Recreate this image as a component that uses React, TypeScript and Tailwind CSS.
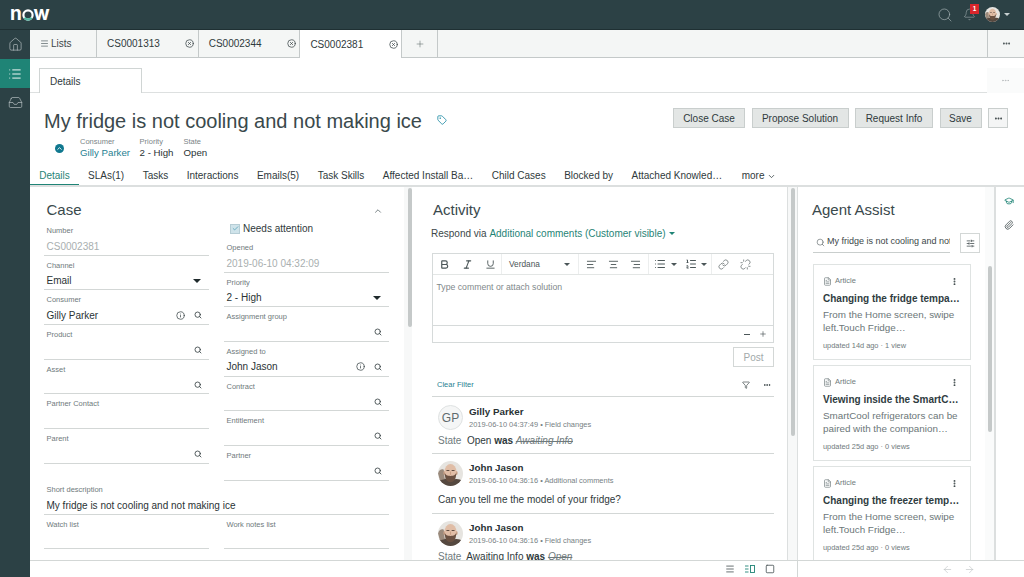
import React from "react";
import {
  Home, List, Inbox, Search, Bell, Menu, CircleX, Plus, Ellipsis, Tag, ChevronUp, ChevronDown, Info, Filter,
  Bold, Italic, Underline, AlignLeft, AlignCenter, AlignRight, ListOrdered, Link, Unlink, GraduationCap,
  Paperclip, SlidersHorizontal, FileText, EllipsisVertical, ArrowLeft, ArrowRight, Square, Check,
} from "lucide-react";

const Caret = ({ className = "" }: { className?: string }) => (
  <span className={`inline-block w-0 h-0 border-x-[3px] border-x-transparent border-t-[3px] border-t-current ${className}`} />
);

function Face({ size }: { size: number }) {
  return (
    <svg width={size} height={size} viewBox="0 0 26 26" className="shrink-0">
      <defs>
        <clipPath id={`fc${size}`}><circle cx="13" cy="13" r="13" /></clipPath>
      </defs>
      <g clipPath={`url(#fc${size})`}>
        <rect width="26" height="26" fill="#e6e4e0" />
        <path d="M0 26 L0 20 C4 18 8 18 13 20 C18 18 22 18 26 21 L26 26 Z" fill="#55483f" />
        <path d="M0 13 C1 9 4 8 6 9 L7 19 L2 20 Z" fill="#9a8a7c" />
        <ellipse cx="6.8" cy="12.5" rx="1.2" ry="2" fill="#c99f85" />
        <ellipse cx="19.2" cy="12.5" rx="1.2" ry="2" fill="#c99f85" />
        <ellipse cx="13" cy="11" rx="6.2" ry="8" fill="#e0bda6" />
        <path d="M7 12 C7 20 10 22 13 22 C16 22 19 20 19 12 C18 15 16.5 15.5 13 15.5 C9.5 15.5 8 15 7 12 Z" fill="#6a5142" />
        <rect x="8.8" y="9.4" width="3" height="0.9" fill="#4a3a30" />
        <rect x="14.2" y="9.4" width="3" height="0.9" fill="#4a3a30" />
        <rect x="12.4" y="11" width="1.2" height="3.4" fill="#c99f85" />
      </g>
    </svg>
  );
}

function Field({ label, value, muted, select, info, search = true, className = "" }: {
  label: string; value?: string; muted?: boolean; select?: boolean; info?: boolean; search?: boolean; className?: string;
}) {
  return (
    <div className={`h-[34.67px] border-b border-[#d3d7d6] flex flex-col pl-[2.5px] pr-[2px] ${className}`}>
      <div className="text-[7.5px] leading-[9px] mt-[5px] text-[#6f7a7c]">{label}</div>
      <div className="flex items-center h-[16px] mt-[3px] pr-[5px]">
        <span className={`flex-1 text-[10px] whitespace-nowrap ${muted ? "text-[#a9afb0]" : "text-[#2a3335]"}`}>{value}</span>
        {info && <Info size={9} className="text-[#3c4749] mr-[9px]" />}
        {select ? <Caret className="text-[#1f2a2c] border-x-[4px] border-t-[4px] mr-[1px]" /> : search && <Search size={8} strokeWidth={2.6} className="text-[#3c4749]" />}
      </div>
    </div>
  );
}

function Entry({ avatar, name, date, kind, children, className = "" }: { avatar: React.ReactNode; name: string; date: string; kind: string; children: React.ReactNode; className?: string }) {
  return (
    <div className={`border-b border-[#d3d7d6] px-[6px] w-[342px] overflow-hidden ${className}`}>
      <div className="flex gap-[6px] items-start pt-[7px]">
        {avatar}
        <div>
          <div className="text-[9.8px] font-bold leading-[12px] mt-[1px] text-[#283133]">{name}</div>
          <div className="text-[7.45px] leading-[10px] mt-[2px] text-[#778184]">{date} • {kind}</div>
        </div>
      </div>
      {children}
    </div>
  );
}

function Card({ title, body, meta }: { title: string; body: string[]; meta: string }) {
  return (
    <div className="h-[96px] shrink-0 border border-[#dfe3e2] px-[9px] pt-[11px] bg-white">
      <div className="flex items-center h-[10px]">
        <FileText size={9} className="text-[#7f898b]" />
        <span className="ml-[3px] text-[7.5px] text-[#6f7a7c] flex-1">Article</span>
        <EllipsisVertical size={9} strokeWidth={3} className="text-[#3c4749] mr-[2px]" />
      </div>
      <div className="text-[10px] font-bold mt-[6px] leading-[14px] text-[#2f3c3f] whitespace-nowrap">{title}</div>
      <div className="text-[9.85px] mt-[3px] leading-[12.5px] text-[#6b7678] whitespace-nowrap">{body[0]}<br />{body[1]}</div>
      <div className="text-[7.4px] mt-[7px] leading-[10px] text-[#6f7a7c]">{meta}</div>
    </div>
  );
}

const tabs = ["CS0001313", "CS0002344", "CS0002381"];
const subTabs = ["SLAs(1)", "Tasks", "Interactions", "Emails(5)", "Task Skills", "Affected Install Ba…", "Child Cases", "Blocked by", "Attached Knowled…"];

export default function App() {
  return (
    <div className="w-[1024px] h-[577px] overflow-hidden flex flex-col bg-white text-[#2a3335] font-['Liberation_Sans',Arial,sans-serif]">
      {/* Top bar */}
      <header className="h-[30px] shrink-0 bg-[#2c4145] border-b border-[#1f3033] flex items-center pl-[10px] pr-[14px]">
        <div className="flex items-center text-white font-['Inter',sans-serif] font-bold text-[19px] leading-none h-[19px] tracking-[-0.4px]">
          <span className="-mt-[2px]">n</span>
          <svg width="12" height="12" viewBox="0 0 12 12" className="ml-[0.5px] -mr-[0.5px]">
            <circle cx="6" cy="6" r="4.6" fill="none" stroke="#fff" strokeWidth="2.2" />
            <path d="M2.4 8.8 A4.6 4.6 0 0 0 9.6 8.8" fill="none" stroke="#4fb8a0" strokeWidth="2.2" />
          </svg>
          <span className="-mt-[2px]">w</span>
        </div>
        <div className="flex-1" />
        <Search size={16} strokeWidth={1} className="text-[#a9b5b6] mr-[10.5px]" />
        <div className="relative mr-[9px]">
          <Bell size={13} strokeWidth={1} className="text-[#a9b5b6]" />
          <span className="absolute -top-[4px] left-[7px] w-[9px] h-[10px] bg-[#d9262c] text-white text-[6.5px] leading-[10px] text-center font-bold">1</span>
        </div>
        <Face size={15} />
        <Caret className="ml-[4px] text-[#c9d1d2] border-x-[2px] border-t-[2px]" />
      </header>

      <div className="flex-1 flex min-h-0">
        {/* Left nav */}
        <nav className="w-[30px] shrink-0 bg-[#2c4145] flex flex-col">
          <div className="h-[29px] flex items-center justify-center"><Home size={15} strokeWidth={1} className="text-[#c3cccd]" /></div>
          <div className="h-[29px] bg-[#1f8476] flex items-center justify-center"><List size={14} strokeWidth={1.6} className="text-white" /></div>
          <div className="h-[29px] flex items-center justify-center"><Inbox size={15} strokeWidth={1} className="text-[#c3cccd]" /></div>
        </nav>

        <div className="flex-1 min-w-0 flex flex-col">
          {/* Workspace tabs */}
          <div className="h-[28px] shrink-0 flex bg-[#f4f6f5] border-b border-[#c4c9c9] text-[10px]">
            <div className="w-[67px] flex items-center pl-[10px] border-r border-[#c4c9c9] text-[#3c4749]">
              <Menu size={9} className="mr-[2px] text-[#5f6b6d]" />Lists
            </div>
            {tabs.map((t, i) => (
              <div key={t} className={`w-[101.7px] flex items-center pl-[10px] pr-[3.5px] border-r border-[#c4c9c9] text-[#2f3a3c] ${i === 2 ? "bg-white h-[28px]" : ""}`}>
                <span className="flex-1">{t}</span>
                <CircleX size={9} className="text-[#3c4749]" />
              </div>
            ))}
            <div className="w-[36px] flex items-center justify-center border-r border-[#c4c9c9]"><Plus size={10} strokeWidth={1.2} className="text-[#4d585a]" /></div>
            <div className="flex-1" />
            <div className="w-[37px] flex items-center justify-center border-l border-[#c4c9c9]"><Ellipsis size={9} strokeWidth={3} className="text-[#3c4749]" /></div>
          </div>

          {/* Details tab row */}
          <div className="h-[35px] shrink-0 flex items-end pl-[9px] border-b border-[#dde0e0]">
            <div className="w-[103px] h-[25px] border border-b-0 border-[#d0d5d4] bg-white -mb-px flex items-center pl-[10px] text-[10px] text-[#2f3a3c]">Details</div>
            <div className="flex-1" />
            <div className="w-[37px] h-[25px] bg-[#fafbfb] flex items-center justify-center -mb-px"><Ellipsis size={9} strokeWidth={2} className="text-[#b4babb]" /></div>
          </div>

          {/* Title row */}
          <div className="h-[43px] shrink-0 flex pl-[14px] pr-[16px]">
            <h1 className="text-[20px] leading-[26px] mt-[15px] text-[#3a494c] font-normal whitespace-nowrap">My fridge is not cooling and not making ice</h1>
            <Tag size={10} className="text-[#1d8aa3] mt-[22px] ml-[15px]" />
            <div className="flex-1" />
            <div className="flex gap-[6.5px] mt-[15px] h-[20px] text-[10px] text-[#2f3a3c]">
              {["Close Case", "Propose Solution", "Request Info", "Save"].map((b, i) => (
                <div key={b} className={`${["w-[72px]", "w-[97px]", "w-[78px]", "w-[42px]"][i]} border border-[#c9cecd] bg-[#e3e6e5] flex items-center justify-center`}>{b}</div>
              ))}
              <div className="w-[20px] border border-[#c9cecd] bg-[#f4f5f5] flex items-center justify-center"><Ellipsis size={9} strokeWidth={3} /></div>
            </div>
          </div>

          {/* Meta */}
          <div className="h-[32px] shrink-0 flex pl-[25px] items-start">
            <div className="mt-[8px] w-[9px] h-[9px] rounded-full bg-[#10788f] flex items-center justify-center"><ChevronUp size={7} strokeWidth={3} className="text-white" /></div>
            <div className="ml-[16px]"><div className="text-[7.5px] leading-[9px] mt-[1px] text-[#7b8587]">Consumer</div><div className="text-[9.7px] leading-[12px] mt-[1px] text-[#1f7f92]">Gilly Parker</div></div>
            <div className="ml-[9.5px]"><div className="text-[7.5px] leading-[9px] mt-[1px] text-[#7b8587]">Priority</div><div className="text-[9.7px] leading-[12px] mt-[1px]">2 - High</div></div>
            <div className="ml-[10px]"><div className="text-[7.5px] leading-[9px] mt-[1px] text-[#7b8587]">State</div><div className="text-[9.7px] leading-[12px] mt-[1px]">Open</div></div>
          </div>

          {/* Sub tabs */}
          <div className="h-[19px] shrink-0 flex items-start border-b-2 border-[#dcdfdf] text-[10px] text-[#2f3a3c]">
            <div className="h-[17px] w-[49px] text-center leading-[16px] text-[#1f8476] border-b border-[#1f8476]">Details</div>
            <div className="ml-[9px] flex leading-[16px] gap-[18.5px] whitespace-nowrap">
              {subTabs.map((t) => <span key={t}>{t}</span>)}
              <span className="flex items-center ml-[1px] h-[16px]">more <ChevronDown size={9} className="ml-[2px]" /></span>
            </div>
          </div>

          {/* Columns */}
          <div className="flex-1 min-h-0 flex">
            {/* Case */}
            <section className="w-[374px] shrink-0 pl-[14px] pr-[15px] overflow-hidden">
              <div className="flex items-center justify-between h-[34px] pt-[13px] pl-[2.5px] pr-[5px]">
                <h2 className="text-[15px] font-normal text-[#3a494c]">Case</h2>
                <ChevronUp size={10} className="text-[#5f6b6d] mr-[1px]" />
              </div>
              <div className="grid grid-cols-2 gap-x-[15px]">
                <div>
                  <Field label="Number" value="CS0002381" muted search={false} />
                  <Field label="Channel" value="Email" select />
                  <Field label="Consumer" value="Gilly Parker" info />
                  <Field label="Product" />
                  <Field label="Asset" />
                  <Field label="Partner Contact" search={false} />
                  <Field label="Parent" />
                </div>
                <div>
                  <div className="h-[17px] pb-[2px] flex items-center pl-[6px] text-[10px] text-[#2f3a3c]">
                    <span className="w-[10px] h-[10px] bg-[#cfe3ea] border border-[#b6cdd5] flex items-center justify-center mr-[3px]"><Check size={7} className="text-[#2a8aa5]" /></span>
                    Needs attention
                  </div>
                  <Field label="Opened" value="2019-06-10 04:32:09" muted search={false} />
                  <Field label="Priority" value="2 - High" select />
                  <Field label="Assignment group" />
                  <Field label="Assigned to" value="John Jason" info />
                  <Field label="Contract" />
                  <Field label="Entitlement" />
                  <Field label="Partner" />
                </div>
              </div>
              <Field label="Short description" value="My fridge is not cooling and not making ice" search={false} className="mt-[-0.5px]" />
              <div className="grid grid-cols-2 gap-x-[15px]">
                <Field label="Watch list" search={false} />
                <Field label="Work notes list" search={false} />
              </div>
            </section>
            <div className="w-[8px] shrink-0 bg-[#f7f8f8] pt-[1px] pl-[3.5px]">
              <div className="w-[4px] h-[139px] bg-[#c5c9c9] rounded-full" />
            </div>

            {/* Activity */}
            <section className="w-[375px] shrink-0 pl-[20px] overflow-hidden">
              <h2 className="text-[15px] font-normal text-[#3a494c] h-[34px] pt-[10px] pl-[1px] leading-[26px]">Activity</h2>
              <div className="text-[10px] h-[19px] -ml-[1px] pt-[6px] leading-[12px] whitespace-nowrap flex items-center text-[#3c4749]">
                Respond via&nbsp;<span className="text-[#1f8476]">Additional comments (Customer visible)</span><Caret className="ml-[3px] text-[#1f8476]" />
              </div>
              <div className="mt-[13px] h-[90px] w-[342px] border border-[#d6dada] flex flex-col">
                <div className="h-[21px] shrink-0 border-b border-[#e3e6e5] flex items-center text-[#4b5658]">
                  <div className="w-[69px] h-full flex items-center gap-[12px] pl-[6px] border-r border-[#eceeee]">
                    <Bold size={11} strokeWidth={2.6} /><Italic size={11} strokeWidth={2.4} /><Underline size={11} strokeWidth={2} />
                  </div>
                  <div className="w-[77px] h-full flex items-center px-[7px] text-[8.3px] border-r border-[#eceeee]"><span className="flex-1">Verdana</span><Caret className="mr-[1px]" /></div>
                  <div className="w-[70px] h-full flex items-center gap-[11px] pl-[7px] border-r border-[#eceeee]">
                    <AlignLeft size={11} /><AlignCenter size={11} /><AlignRight size={11} />
                  </div>
                  <div className="w-[63px] h-full flex items-center pl-[5px] border-r border-[#eceeee]">
                    <List size={12} /><Caret className="ml-[5px] mr-[7.5px]" /><ListOrdered size={12} /><Caret className="ml-[4.5px]" />
                  </div>
                  <div className="flex items-center gap-[11px] pl-[6px]"><Link size={11} strokeWidth={1.4} /><Unlink size={11} strokeWidth={1.4} /></div>
                </div>
                <div className="flex-1 text-[8.7px] text-[#7f898b] pt-[7px] pl-[3.5px] leading-[10px]">Type comment or attach solution</div>
                <div className="h-[17px] shrink-0 border-t border-[#d6dada] flex items-center justify-end gap-[9px] pr-[6px] text-[#4b5658]">
                  <span className="w-[6px] h-px bg-[#4b5658]" /><Plus size={8} strokeWidth={2} />
                </div>
              </div>
              <div className="flex justify-end w-[342px] mt-[4px]">
                <div className="w-[41px] h-[20px] border border-[#d3d7d6] flex items-center justify-center text-[10px] text-[#a2a9aa]">Post</div>
              </div>
              <div className="w-[342px] h-[30px] flex items-center pl-[5px] pr-[3px] border-b border-[#d3d7d6]">
                <span className="flex-1 text-[7.5px] text-[#1f7f92] mt-[6px]">Clear Filter</span>
                <Filter size={8} className="text-[#3c4749] mr-[13px] mt-[6px]" />
                <Ellipsis size={8} strokeWidth={3} className="text-[#3c4749] mt-[6px]" />
              </div>
              <Entry className="h-[57px] pt-[1px]" name="Gilly Parker" date="2019-06-10 04:37:49" kind="Field changes"
                avatar={<div className="w-[25px] h-[25px] rounded-full bg-[#f5f6f6] border border-[#dfe2e2] flex items-center justify-center text-[12px] text-[#5f6b6d]">GP</div>}>
                <div className="text-[10px] leading-[12px] mt-[5px] whitespace-nowrap text-[#2f3a3c]">
                  <span className="text-[#6f7a7c]">State</span>&nbsp; Open <b>was</b> <i className="line-through text-[#6f7a7c]">Awaiting Info</i>
                </div>
              </Entry>
              <Entry className="h-[60px]" name="John Jason" date="2019-06-10 04:36:16" kind="Additional comments" avatar={<Face size={25} />}>
                <div className="text-[10px] leading-[12px] mt-[8px] whitespace-nowrap text-[#2f3a3c]">Can you tell me the model of your fridge?</div>
              </Entry>
              <Entry className="h-[60px] border-b-0" name="John Jason" date="2019-06-10 04:36:16" kind="Field changes" avatar={<Face size={25} />}>
                <div className="text-[10px] leading-[12px] mt-[5px] whitespace-nowrap text-[#2f3a3c]">
                  <span className="text-[#6f7a7c]">State</span>&nbsp; Awaiting Info <b>was</b> <i className="line-through text-[#6f7a7c]">Open</i>
                </div>
              </Entry>
            </section>
            <div className="w-[11px] shrink-0 bg-[#f7f8f8] border-x border-[#dcdfdf] pt-[1px] pl-[3px]">
              <div className="w-[4px] h-[248px] bg-[#c5c9c9] rounded-full" />
            </div>

            {/* Agent Assist */}
            <section className="w-[187px] shrink-0 pl-[15px] overflow-hidden">
              <h2 className="text-[15px] font-normal text-[#3a494c] h-[34px] pt-[10px] -ml-[1px] leading-[26px] whitespace-nowrap">Agent Assist</h2>
              <div className="flex mt-[11px] h-[21px]">
                <div className="w-[137px] border-b border-[#c9cecd] flex items-center pl-[3px] overflow-hidden text-[9px] text-[#3c4749] whitespace-nowrap">
                  <Search size={9} strokeWidth={1.4} className="mr-[2px] shrink-0" />My fridge is not cooling and not
                </div>
                <div className="w-[20px] mt-[1px] ml-[10px] border border-[#d3d7d6] flex items-center justify-center"><SlidersHorizontal size={9} className="text-[#3c4749]" /></div>
              </div>
              <div className="flex flex-col gap-[5px] mt-[11px] w-[158px]">
                <Card title="Changing the fridge tempa…" body={["From the Home screen, swipe", "left.Touch Fridge…"]} meta="updated 14d ago · 1 view" />
                <Card title="Viewing inside the SmartC…" body={["SmartCool refrigerators can be", "paired with the companion…"]} meta="updated 25d ago · 0 views" />
                <Card title="Changing the freezer temp…" body={["From the Home screen, swipe", "left.Touch Fridge…"]} meta="updated 25d ago · 0 views" />
              </div>
            </section>
            <div className="w-[9px] shrink-0 bg-[#fafbfb] pt-[79px] pl-[3px]">
              <div className="w-[4px] h-[166px] bg-[#c5c9c9] rounded-full" />
            </div>

            {/* Right rail */}
            <aside className="flex-1 border-l-2 border-[#dcdfdf] flex flex-col items-center pt-[9px] gap-[14px] pr-[2px]">
              <GraduationCap size={10} className="text-[#1f8476]" />
              <Paperclip size={10} className="text-[#4b5658]" />
            </aside>
          </div>

          {/* Bottom bar */}
          <div className="h-[17px] shrink-0 border-t border-[#d3d7d6] flex items-center bg-white">
            <div className="w-[768px] h-full border-r border-[#d3d7d6] flex items-center justify-end gap-[10px] pr-[22px]">
              <Menu size={10} className="text-[#4b5658]" />
              <svg width="10" height="10" viewBox="0 0 10 10" fill="none" stroke="#1f8476" strokeWidth="0.9"><path d="M0 2h3.5M0 5h3.5M0 8h3.5" /><rect x="5.5" y="1.5" width="4" height="7" /></svg>
              <Square size={10} className="text-[#4b5658]" />
            </div>
            <div className="flex-1 flex items-center justify-end gap-[11px] pr-[49.5px] text-[#b4babb]">
              <ArrowLeft size={11} strokeWidth={1.2} /><ArrowRight size={11} strokeWidth={1.2} />
            </div>
          </div>
        </div>
      </div>
    </div>
  );
}
